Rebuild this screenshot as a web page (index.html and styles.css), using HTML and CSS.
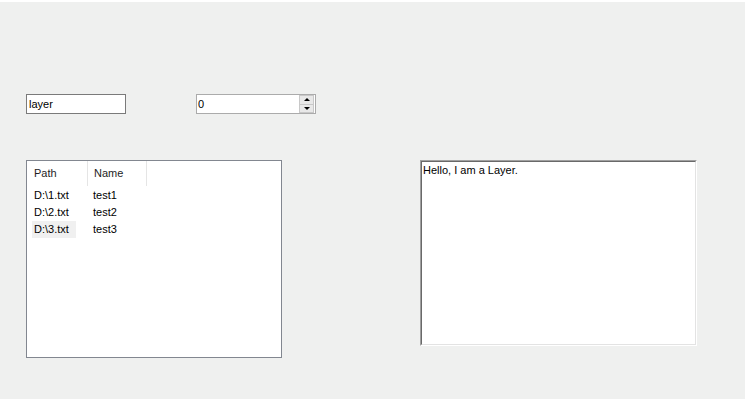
FILE: index.html
```html
<!DOCTYPE html>
<html>
<head>
<meta charset="utf-8">
<link rel="stylesheet" href="styles.css">
</head>
<body>
<div class="window">
  <div class="row row-top">
    <div class="textbox">layer</div>
    <div class="spinner">
      <div class="spin-value">0</div>
      <div class="spin-buttons">
        <div class="spin-btn"><span class="arrow-up"></span></div>
        <div class="spin-btn"><span class="arrow-down"></span></div>
      </div>
    </div>
  </div>
  <div class="row row-bottom">
    <div class="listview">
      <div class="lv-header">
        <div class="lv-col col-path">Path</div>
        <div class="lv-col col-name">Name</div>
      </div>
      <div class="lv-row"><span class="cell cell-path">D:\1.txt</span><span class="cell cell-name">test1</span></div>
      <div class="lv-row"><span class="cell cell-path">D:\2.txt</span><span class="cell cell-name">test2</span></div>
      <div class="lv-row"><span class="cell cell-path selected">D:\3.txt</span><span class="cell cell-name">test3</span></div>
    </div>
    <div class="memo-outer">
      <div class="memo-inner">Hello, I am a Layer.</div>
    </div>
  </div>
</div>
</body>
</html>
```

FILE: styles.css
```css
html, body {
  margin: 0;
  padding: 0;
  background: #ffffff;
}
body {
  font-family: "Liberation Sans", Arial, sans-serif;
  font-size: 11px;
  color: #000000;
}
.window {
  margin-top: 2px;
  width: 745px;
  height: 397px;
  background: #eff0ef;
  box-sizing: border-box;
  padding: 92px 0 0 26px;
}
.row {
  display: flex;
  align-items: flex-start;
}
.row-top {
  gap: 70px;
}
.row-bottom {
  margin-top: 46px;
  gap: 138px;
}
.textbox {
  width: 100px;
  height: 20px;
  box-sizing: border-box;
  border: 1px solid #7a7a7a;
  background: #ffffff;
  padding-left: 2px;
  line-height: 18px;
}
.spinner {
  width: 120px;
  height: 20px;
  box-sizing: border-box;
  border: 1px solid #ababab;
  background: #ffffff;
  display: flex;
}
.spin-value {
  flex: 1;
  padding-left: 1px;
  line-height: 18px;
}
.spin-buttons {
  width: 15px;
  margin-right: 1px;
  display: flex;
  flex-direction: column;
}
.spin-btn {
  flex: 1;
  background: #e8e8e8;
  border: 1px solid #c8c8c8;
  display: flex;
  align-items: center;
  justify-content: center;
}
.spin-btn + .spin-btn {
  border-top: none;
}
.arrow-up {
  width: 0;
  height: 0;
  border-left: 3px solid transparent;
  border-right: 3px solid transparent;
  border-bottom: 3px solid #000000;
}
.arrow-down {
  width: 0;
  height: 0;
  border-left: 3px solid transparent;
  border-right: 3px solid transparent;
  border-top: 3px solid #000000;
}
.listview {
  width: 256px;
  height: 198px;
  box-sizing: border-box;
  border: 1px solid #828790;
  background: #ffffff;
}
.lv-header {
  display: flex;
  height: 26px;
}
.lv-col {
  box-sizing: border-box;
  height: 25px;
  border-right: 1px solid #e5e5e5;
  line-height: 25px;
  color: #1e1e1e;
}
.col-path {
  width: 61px;
  padding-left: 7px;
}
.col-name {
  width: 59px;
  padding-left: 6px;
}
.lv-row {
  display: flex;
  height: 17px;
  line-height: 17px;
}
.cell {
  box-sizing: border-box;
}
.cell-path {
  width: 44px;
  margin-left: 5px;
  padding-left: 2px;
}
.cell-path.selected {
  background: #f0f0f0;
}
.cell-name {
  margin-left: 17px;
}
.memo-outer {
  width: 277px;
  height: 186px;
  box-sizing: border-box;
  border-style: solid;
  border-width: 1px;
  border-color: #a0a0a0 #ffffff #ffffff #a0a0a0;
}
.memo-inner {
  height: 100%;
  box-sizing: border-box;
  border-style: solid;
  border-width: 1px;
  border-color: #696969 #e3e3e3 #e3e3e3 #696969;
  background: #ffffff;
  padding: 2px 0 0 1px;
  line-height: 13px;
}
```
